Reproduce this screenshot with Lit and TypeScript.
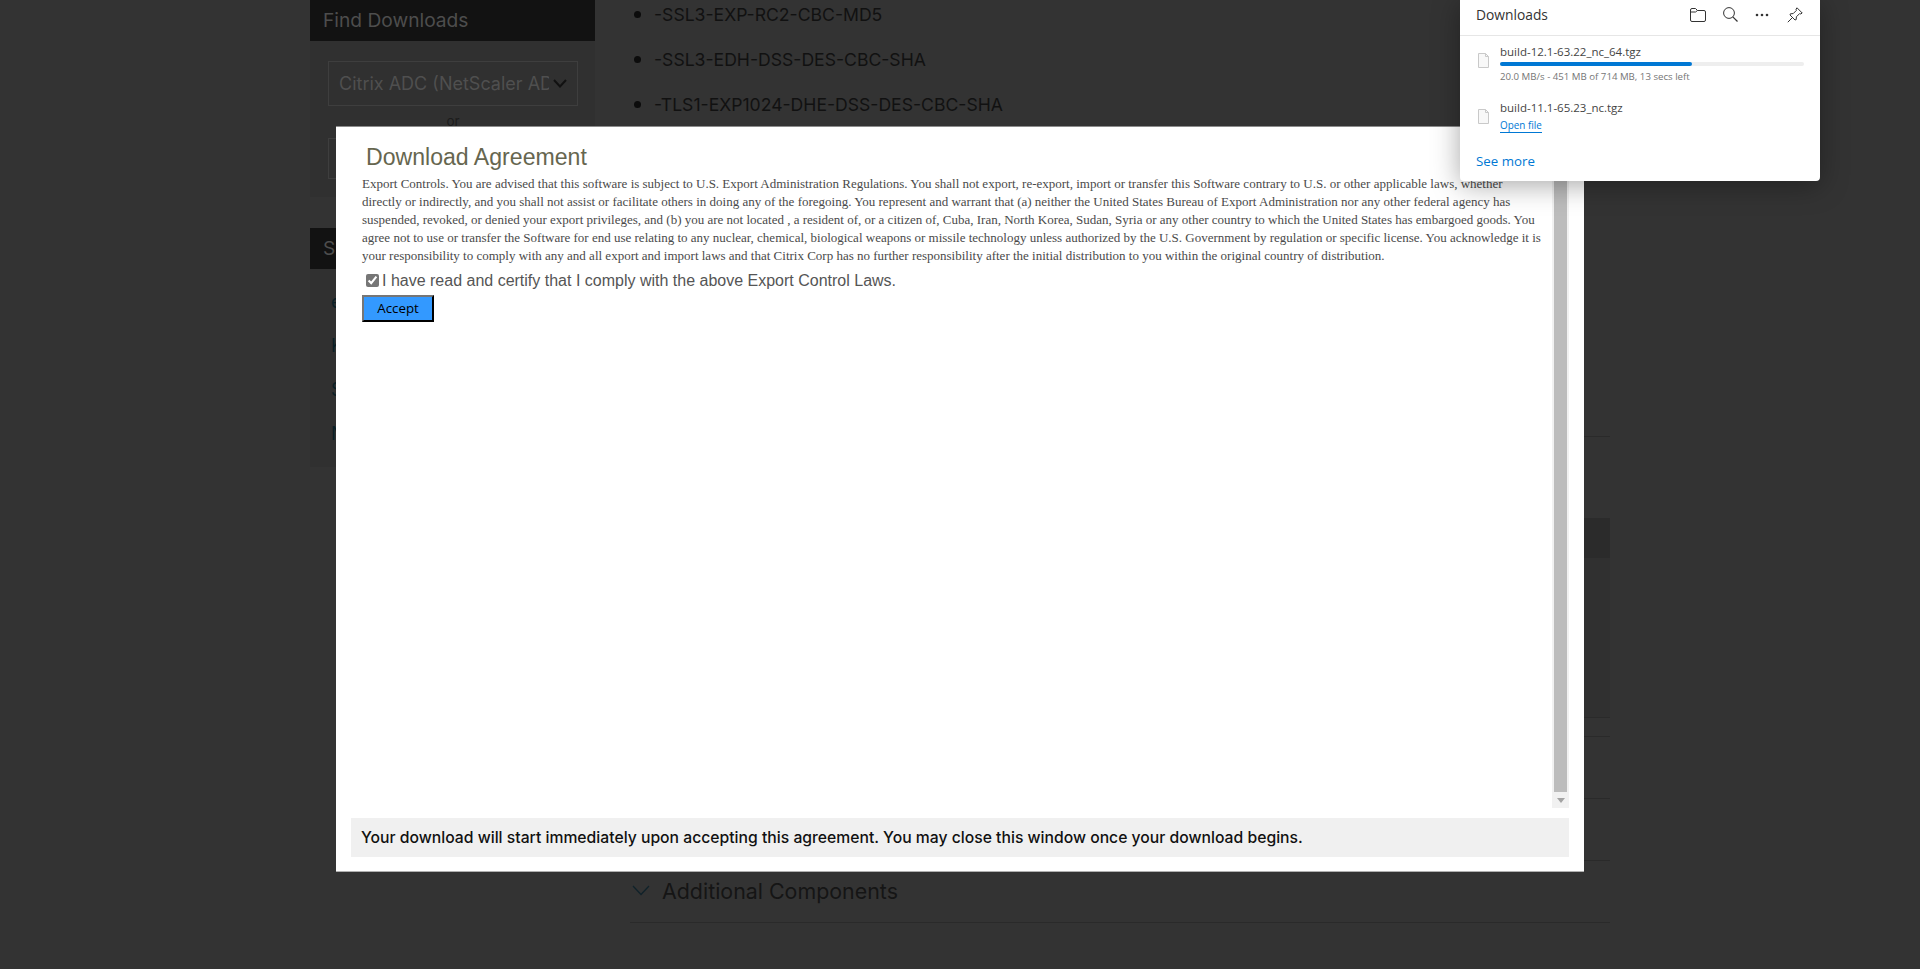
import { LitElement, html, css } from "lit";
import { customElement } from "lit/decorators.js";

@customElement("app-root")
export class AppRoot extends LitElement {
  static styles = css`
    :host { display: block; }
    * { box-sizing: border-box; }
    .page {
      position: relative; height: 969px; overflow: hidden; background: #333;
      display: flex; padding-left: 310px; font-family: Inter, "Noto Sans", sans-serif; color: #111;
    }
    .sidebar { width: 285px; flex: none; display: flex; flex-direction: column; }
    .side-head {
      height: 41px; background: #121212; color: #4d4d4d; font-size: 19.2px; line-height: 41px;
      padding-left: 13px;
    }
    .panel-a { height: 197px; background: #303030; }
    .panel-a-body { padding: 20px 17px 0 18px; display: flex; flex-direction: column; }
    .select {
      height: 45px; border: 1px solid #3e3e3e; display: flex; align-items: center;
      padding: 0 10px 0 10px; color: #4f4f4f; font-size: 18px; gap: 4px;
    }
    .select span { flex: 1; overflow: hidden; white-space: nowrap; }
    .select svg { flex: none; }
    .or { text-align: center; font-size: 13.5px; line-height: 16px; color: #1c1c1c; margin: 7px 0 9px; }
    .input { height: 41px; border: 1px solid #3e3e3e; }
    .panel-b { margin-top: 31px; height: 239px; background: #303030; }
    .links { display: flex; flex-direction: column; gap: 20px; padding: 21px 0 0 21px; }
    .links div { height: 24px; line-height: 24px; font-size: 18px; color: #0a1f26; white-space: nowrap; }
    .main { width: 980px; margin-left: 35px; flex: none; display: flex; flex-direction: column; }
    .top { height: 437px; border-bottom: 1px solid #2a2a2a; }
    ul { margin: 0; padding: 3px 0 0 4px; list-style: none; }
    li { height: 45px; line-height: 24px; font-size: 17.6px; color: #111; display: flex; gap: 13px; }
    li::before {
      content: ""; width: 7px; height: 7px; border-radius: 50%; background: #0c0c0c;
      flex: none; margin-top: 8px;
    }
    .table { margin-top: 81px; height: 200px; background: #303030; border-bottom: 1px solid #2a2a2a; }
    .table-head { height: 40px; background: #2b2b2b; }
    .acc {
      flex: none; border-bottom: 1px solid #2a2a2a; display: flex; align-items: center;
      gap: 12px; padding: 0 0 2px 2px; font-size: 21.4px; color: #151515;
    }
    .h19 { height: 19px; }
    .h62 { height: 62px; }

    .modal {
      position: absolute; left: 336px; top: 126px; width: 1248px; height: 746px;
      background: #fff; border-top: 1px solid #8c8c8c; border-bottom: 1px solid #b0b0b0;
      padding: 8px 15px 14px; display: flex; flex-direction: column;
    }
    .frame { flex: 1; min-height: 0; display: flex; }
    .frame-content { flex: 1; min-width: 0; padding: 8px 0 0 11px; }
    h1 {
      margin: 0 0 4px 4px; font: 400 23.1px/28px "Liberation Sans", Arial, sans-serif; color: #66664f;
    }
    .legal {
      margin: 0; font: 13px/18px "Liberation Serif", "Times New Roman", serif; color: #4a4a4a;
      white-space: nowrap;
    }
    .certify {
      display: flex; align-items: center; margin: 6px 0 4px; padding-left: 4px; height: 20px;
      font: 16px/20px "Liberation Sans", Arial, sans-serif; color: #555;
    }
    .certify input { margin: -2px 3px 0 0; width: 13px; height: 13px; accent-color: #767676; }
    .accept {
      display: block; width: 72px; height: 27px; padding: 0 0 2px; background: #3399ff;
      border: 2px outset #767676; border-color: #767676 #1f1f1f #1f1f1f #767676;
      font: 13.33px "Open Sans", sans-serif; color: #000;
    }
    .scroll { width: 17px; flex: none; background: #f1f1f1; display: flex; flex-direction: column; }
    .thumb { flex: 1; margin: 0 2px 0 2px; background: #bcbcbc; }
    .arrow { height: 16px; display: flex; align-items: center; justify-content: center; }
    .foot {
      flex: none; margin-top: 10px; height: 39px; background: #f0f0f0; padding-left: 10px;
      font-size: 15.73px; font-weight: 500; line-height: 39px; color: #111;
    }

    .dl {
      position: absolute; left: 1460px; top: 0; width: 360px; height: 181px; background: #fff;
      border-radius: 0 0 4px 4px; box-shadow: 0 4px 28px rgba(0, 0, 0, 0.35);
      font-family: "Open Sans", "Noto Sans", sans-serif; display: flex; flex-direction: column;
    }
    .dl-head {
      height: 36px; flex: none; border-bottom: 1px solid #e6e6e6; display: flex; align-items: center;
      padding: 0 17px 6px 16px; font-size: 13.8px; font-weight: 500; color: #333;
    }
    .dl-title { flex: 1; }
    .dl-icons { display: flex; gap: 17px; align-items: center; }
    .pin { margin-left: 1px; }
    .dl-item { display: flex; gap: 11px; padding-left: 18px; }
    .dl-item svg { flex: none; margin-top: 8px; }
    .first { margin-top: 9px; height: 47px; }
    .second { margin-top: 9px; height: 42px; }
    .dl-body { flex: 1; min-width: 0; padding-right: 16px; }
    .name { font-size: 11.5px; line-height: 16px; color: #444; margin-top: -1px; }
    .bar { height: 4px; border-radius: 2px; background: #eee; margin-top: 2px; }
    .bar div { height: 4px; border-radius: 2px; background: #0078d4; }
    .sub { font-size: 9.67px; line-height: 14px; color: #767676; margin-top: 4px; }
    .open {
      display: block; width: fit-content; font-size: 9.9px; line-height: 14px; color: #0078d4;
      margin-top: 2px; border-bottom: 1px solid #0078d4;
    }
    .more { margin: 8px 0 0 16px; font-size: 13.3px; line-height: 20px; color: #0078d4; }
  `;

  render() {
    const fileIcon = html`<svg width="11" height="15" viewBox="0 0 11 15" fill="none">
      <path d="M.5 .5H7.5L10.5 3.5V14.5H.5Z" fill="#f8f8f8" stroke="#c9c9c9"/>
      <path d="M7.5 .5V3.5H10.5" stroke="#c9c9c9"/></svg>`;
    return html`
      <div class="page">
        <aside class="sidebar">
          <section class="panel-a">
            <div class="side-head">Find Downloads</div>
            <div class="panel-a-body">
              <div class="select"><span>Citrix ADC (NetScaler ADC)</span>
                <svg width="14" height="9" viewBox="0 0 14 9" fill="none"><path d="M1 1L7 7.5L13 1" stroke="#111" stroke-width="2"/></svg>
              </div>
              <div class="or">or</div>
              <div class="input"></div>
            </div>
          </section>
          <section class="panel-b">
            <div class="side-head">Support</div>
            <div class="links">
              <div>eSupport</div><div>Knowledge</div><div>Support</div><div>Notifications</div>
            </div>
          </section>
        </aside>
        <main class="main">
          <div class="top">
            <ul>
              <li>-SSL3-EXP-RC2-CBC-MD5</li>
              <li>-SSL3-EDH-DSS-DES-CBC-SHA</li>
              <li>-TLS1-EXP1024-DHE-DSS-DES-CBC-SHA</li>
            </ul>
          </div>
          <div class="table"><div class="table-head"></div></div>
          <div class="acc h19"></div>
          <div class="acc h62"></div>
          <div class="acc h62"></div>
          <div class="acc h62">
            <svg width="18" height="11" viewBox="0 0 18 11" fill="none"><path d="M1 1L9 9.5L17 1" stroke="#10222a" stroke-width="1.3"/></svg>
            <span>Additional Components</span>
          </div>
        </main>

        <div class="modal">
          <div class="frame">
            <div class="frame-content">
              <h1>Download Agreement</h1>
              <p class="legal">Export Controls. You are advised that this software is subject to U.S. Export Administration Regulations. You shall not export, re-export, import or transfer this Software contrary to U.S. or other applicable laws, whether<br />directly or indirectly, and you shall not assist or facilitate others in doing any of the foregoing. You represent and warrant that (a) neither the United States Bureau of Export Administration nor any other federal agency has<br />suspended, revoked, or denied your export privileges, and (b) you are not located , a resident of, or a citizen of, Cuba, Iran, North Korea, Sudan, Syria or any other country to which the United States has embargoed goods. You<br />agree not to use or transfer the Software for end use relating to any nuclear, chemical, biological weapons or missile technology unless authorized by the U.S. Government by regulation or specific license. You acknowledge it is<br />your responsibility to comply with any and all export and import laws and that Citrix Corp has no further responsibility after the initial distribution to you within the original country of distribution.</p>
              <label class="certify"><input type="checkbox" checked />I have read and certify that I comply with the above Export Control Laws.</label>
              <button class="accept">Accept</button>
            </div>
            <div class="scroll">
              <div class="thumb"></div>
              <div class="arrow"><svg width="8" height="5" viewBox="0 0 8 5"><path d="M0 0H8L4 5Z" fill="#a3a3a3"/></svg></div>
            </div>
          </div>
          <div class="foot">Your download will start immediately upon accepting this agreement. You may close this window once your download begins.</div>
        </div>

        <div class="dl">
          <div class="dl-head">
            <span class="dl-title">Downloads</span>
            <span class="dl-icons">
              <svg width="16" height="14" viewBox="0 0 16 14" fill="none" stroke="#333"><path d="M.5 3V2A1.5 1.5 0 0 1 2 .5H5.5L7.5 2.5H14A1.5 1.5 0 0 1 15.5 4V12A1.5 1.5 0 0 1 14 13.5H2A1.5 1.5 0 0 1 .5 12Z"/><path d="M.5 4H5.5L7.5 2.5"/></svg>
              <svg width="15" height="15" viewBox="0 0 15 15" fill="none" stroke="#333"><circle cx="6" cy="6" r="5.4"/><path d="M9.8 9.8L14.5 14.5" stroke-width="1.2"/></svg>
              <svg width="14" height="14" viewBox="0 0 14 14" fill="#333"><circle cx="2" cy="7" r="1.3"/><circle cx="7" cy="7" r="1.3"/><circle cx="12" cy="7" r="1.3"/></svg>
              <svg class="pin" width="16" height="16" viewBox="0 0 16 16" fill="none" stroke="#333"><path d="M10 .8L15.2 6L13.8 7L12.6 6.6L9.4 9.8L9.2 12.6L8 13L3 8L3.4 6.8L6.2 6.6L9.4 3.4L9 2.2Z"/><path d="M5.5 10.5L.8 15.2"/></svg>
            </span>
          </div>
          <div class="dl-item first">
            ${fileIcon}
            <div class="dl-body">
              <div class="name">build-12.1-63.22_nc_64.tgz</div>
              <div class="bar"><div style="width:${(192 / 304) * 100}%"></div></div>
              <div class="sub">20.0 MB/s - 451 MB of 714 MB, 13 secs left</div>
            </div>
          </div>
          <div class="dl-item second">
            ${fileIcon}
            <div class="dl-body">
              <div class="name">build-11.1-65.23_nc.tgz</div>
              <span class="open">Open file</span>
            </div>
          </div>
          <div class="more">See more</div>
        </div>
      </div>
    `;
  }
}
